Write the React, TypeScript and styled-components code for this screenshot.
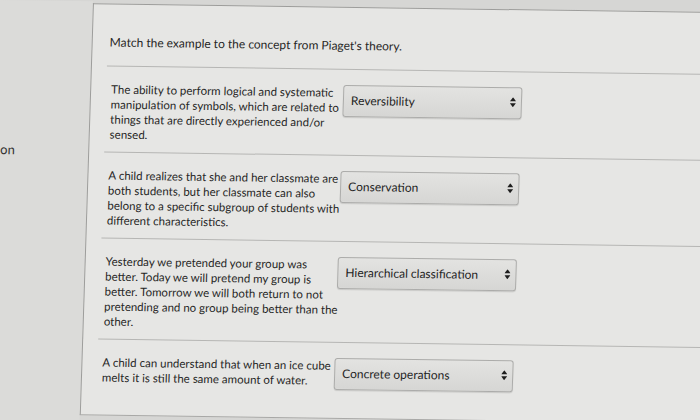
import React from 'react'
import styled, { createGlobalStyle } from 'styled-components'

type Pair = {
    prompt: string[]
    answer: string
}

const pairs: Pair[] = [
    {
        prompt: [
            'The ability to perform logical and systematic',
            'manipulation of symbols, which are related to',
            'things that are directly experienced and/or',
            'sensed.',
        ],
        answer: 'Reversibility',
    },
    {
        prompt: [
            'A child realizes that she and her classmate are',
            'both students, but her classmate can also',
            'belong to a specific subgroup of students with',
            'different characteristics.',
        ],
        answer: 'Conservation',
    },
    {
        prompt: [
            'Yesterday we pretended your group was',
            'better. Today we will pretend my group is',
            'better. Tomorrow we will both return to not',
            'pretending and no group being better than the',
            'other.',
        ],
        answer: 'Hierarchical classification',
    },
    {
        prompt: [
            'A child can understand that when an ice cube',
            'melts it is still the same amount of water.',
        ],
        answer: 'Concrete operations',
    },
]

const GlobalStyle = createGlobalStyle`
    html, body {
        margin: 0;
        padding: 0;
    }
    body {
        background: #d6d6d4;
        font-family: Lato, "Liberation Sans", sans-serif;
        color: #262626;
    }
`

const Frame = styled.div`
    width: 700px;
    height: 420px;
    overflow: hidden;
`

// the screen is seen a little askew, so the whole page is sheared slightly
const Page = styled.div`
    display: flex;
    width: 716px;
    height: 420px;
    transform-origin: 0 0;
    transform: matrix(1, 0.014, -0.032, 1, 0, 0);
`

const Sidebar = styled.aside`
    flex: none;
    width: 88px;
    padding: 141px 0 0 5px;
    background: #dbdbd9;
    font-size: 13px;
    line-height: 16px;
    color: #333;
`

const Panel = styled.main`
    flex: 1;
    margin: 2px 0 6px;
    padding: 30px 0 0 17px;
    border-top: 1px solid #9d9d9b;
    border-left: 1px solid #9d9d9b;
    border-bottom: 1px solid #a8a8a6;
    background: #e6e6e4;
`

const Title = styled.div`
    font-size: 12px;
    line-height: 16px;
    margin-bottom: 15px;
`

const List = styled.div`
    margin-left: -2px;
`

const Row = styled.div`
    display: flex;
    align-items: flex-start;
    gap: 4px;
    padding: 15px 0 10px 5px;
    border-top: 1px solid #b6b6b4;
`

const Prompt = styled.div`
    flex: none;
    width: 228px;
    font-size: 11.5px;
    line-height: 15px;
    white-space: nowrap;
`

const SelectBox = styled.div`
    flex: none;
    box-sizing: border-box;
    display: flex;
    align-items: center;
    justify-content: space-between;
    width: 179px;
    height: 32px;
    padding: 0 5px 2px 7px;
    border: 1px solid #acacaa;
    border-radius: 3px;
    background: linear-gradient(#e3e3e1, #d6d6d4);
    box-shadow: 0 1px 1px rgba(0, 0, 0, 0.12);
    font-size: 12px;
    color: #242424;
`

const Arrows = () => (
    <svg width="6" height="10" viewBox="0 0 6 10">
        <path d="M3 0 L6 4 L0 4 Z" fill="#1e1e1e" />
        <path d="M0 6 L6 6 L3 10 Z" fill="#1e1e1e" />
    </svg>
)

export default function App() {
    return (
        <>
            <GlobalStyle />
            <Frame>
                <Page>
                    <Sidebar>on</Sidebar>
                    <Panel>
                        <Title>Match the example to the concept from Piaget's theory.</Title>
                        <List>
                            {pairs.map((pair, index) => (
                                <Row key={index}>
                                    <Prompt>
                                        {pair.prompt.map((line, i) => (
                                            <div key={i}>{line}</div>
                                        ))}
                                    </Prompt>
                                    <SelectBox>
                                        <span>{pair.answer}</span>
                                        <Arrows />
                                    </SelectBox>
                                </Row>
                            ))}
                        </List>
                    </Panel>
                </Page>
            </Frame>
        </>
    )
}
